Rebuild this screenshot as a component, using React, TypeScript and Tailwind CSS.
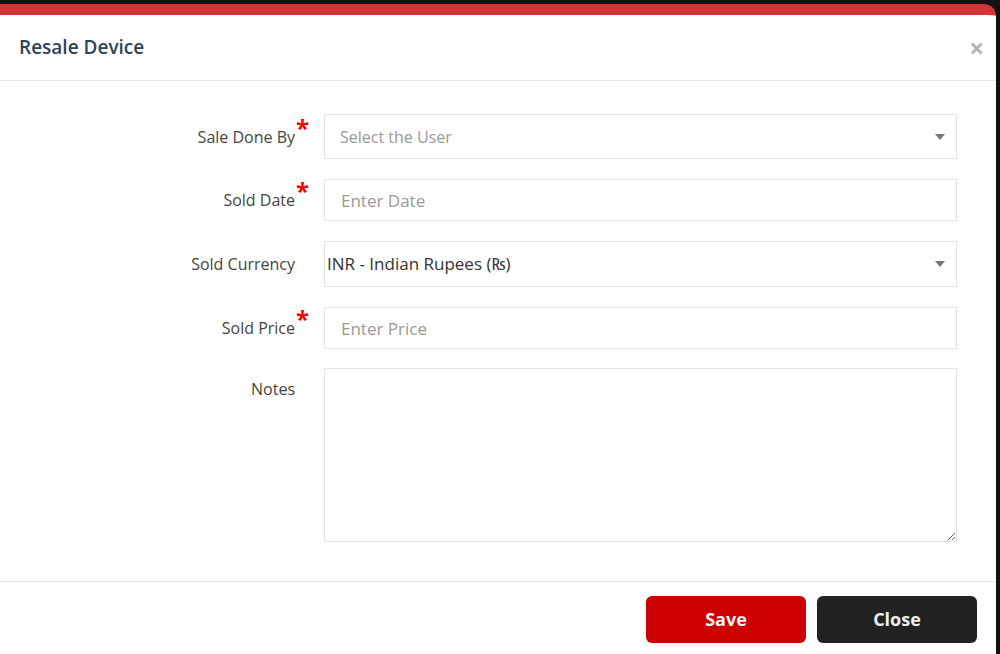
import React from 'react';

const font = { fontFamily: '"Open Sans", "Noto Sans", sans-serif' };

function Label({ text, required }: { text: string; required?: boolean }) {
  return (
    <div className="flex justify-end pr-[10px]">
      <span className="relative text-[16px] text-[#444]">
        {text}
        {required && (
          <span className="absolute left-full top-[-9px] ml-[1px] text-[24px] leading-none font-bold text-[#ff0000]">*</span>
        )}
      </span>
    </div>
  );
}

function Caret() {
  return (
    <svg className="absolute right-[11px] top-1/2 -translate-y-1/2" width="10" height="6" viewBox="0 0 10 6">
      <path d="M0 0 L10 0 L5 6 Z" fill="#777" />
    </svg>
  );
}

export default function App() {
  return (
    <div className="w-[1000px] h-[654px] overflow-hidden bg-[#111] pt-[4px]" style={font}>
      <div className="w-[996px] h-[700px] bg-white rounded-tr-[12px] border-t-[11px] border-[#d23535] flex flex-col">
        {/* Header */}
        <div className="h-[66px] flex items-center justify-between pl-[19px] pr-[12px] border-b border-[#e6e6e6]">
          <h2 className="text-[19px] font-semibold text-[#2f4358]">Resale Device</h2>
          <span className="text-[26px] leading-none font-bold text-[#b5b5b5] mt-[1px]">×</span>
        </div>

        {/* Body */}
        <div className="pt-[33px] pb-[39px] border-b border-[#e6e6e6]">
          <div className="grid grid-cols-[305px_633px] gap-x-[19px] items-center">
            <Label text="Sale Done By" required />
            <div className="relative h-[45px] border border-[#e4e4e4] flex items-center pl-[15px] text-[16px] text-[#999]">
              Select the User
              <Caret />
            </div>

            <div className="col-span-2 h-[20px]" />
            <Label text="Sold Date" required />
            <input
              className="h-[42px] border border-[#e4e4e4] pl-[16px] text-[17px] text-[#333] placeholder:text-[#999] outline-none"
              placeholder="Enter Date"
            />

            <div className="col-span-2 h-[20px]" />
            <Label text="Sold Currency" />
            <div className="relative h-[46px] border border-[#e4e4e4] flex items-center pl-[2px] text-[17px] text-[#333]">
              INR - Indian Rupees (₨)
              <Caret />
            </div>

            <div className="col-span-2 h-[20px]" />
            <Label text="Sold Price" required />
            <input
              className="h-[42px] border border-[#e4e4e4] pl-[16px] text-[17px] text-[#333] placeholder:text-[#999] outline-none"
              placeholder="Enter Price"
            />

            <div className="col-span-2 h-[19px]" />
            <div className="self-start pt-[9px]">
              <Label text="Notes" />
            </div>
            <textarea className="h-[174px] border border-[#e4e4e4] outline-none p-2 text-[16px] resize-y" />
          </div>
        </div>

        {/* Footer */}
        <div className="flex justify-end gap-[11px] pt-[14px] pr-[19px]">
          <button className="w-[160px] h-[47px] rounded-[6px] bg-[#cc0000] text-[#f2f2f2] text-[18px] font-bold">Save</button>
          <button className="w-[160px] h-[47px] rounded-[6px] bg-[#222] text-[#eee] text-[18px] font-bold">Close</button>
        </div>
      </div>
    </div>
  );
}
